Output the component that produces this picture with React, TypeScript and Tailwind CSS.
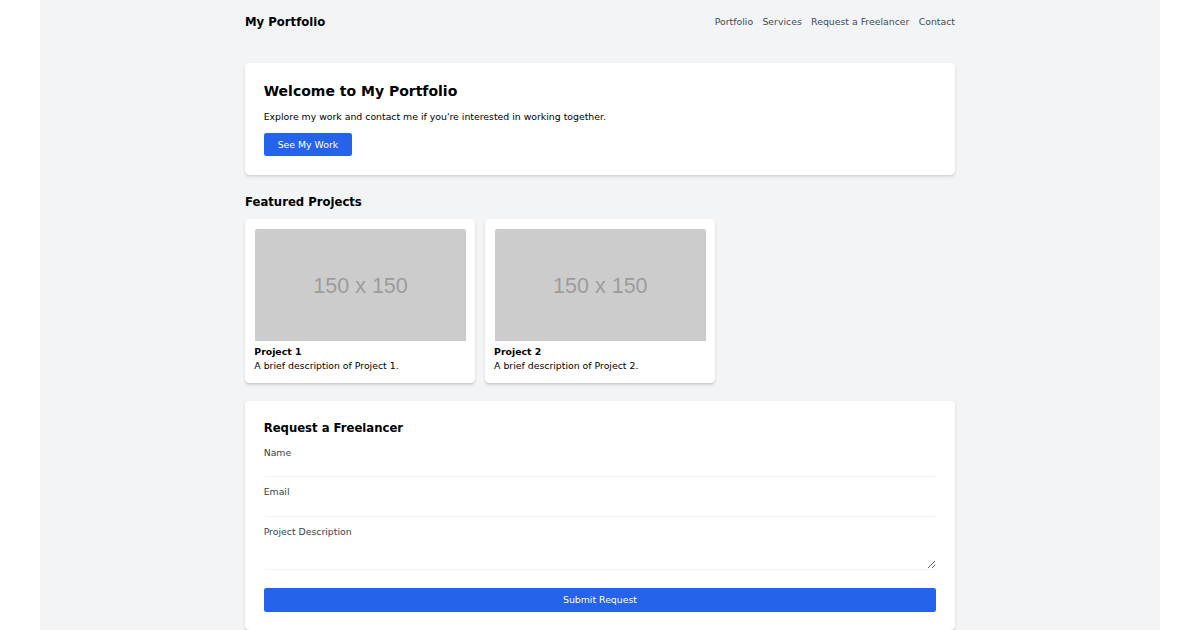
import React from "react";

const cardShadow =
  "shadow-[0_2.33px_3.5px_-0.58px_rgba(0,0,0,0.1),0_1.17px_2.33px_-1.17px_rgba(0,0,0,0.1)]";

function Placeholder() {
  return (
    <div className="ml-[0.5px] h-[112px] w-[211.5px] rounded-t-[2.33px] bg-[#cccccc] flex items-center justify-center overflow-hidden pt-[4px]">
      <span className="font-['Liberation_Sans',Arial,sans-serif] text-[21.5px] leading-none text-[#9c9c9c]">
        150 x 150
      </span>
    </div>
  );
}

function ProjectCard({ n }: { n: number }) {
  return (
    <div className={`bg-white rounded-[4.67px] p-[9.33px] ${cardShadow}`}>
      <Placeholder />
      <h3 className="mt-[4.67px] text-[9.33px] leading-[14px] font-bold text-black">Project {n}</h3>
      <p className="text-[9.33px] leading-[14px] text-black">A brief description of Project {n}.</p>
    </div>
  );
}

export default function App() {
  return (
    <div className="min-h-[630px] bg-white font-['DejaVu_Sans',sans-serif]">
      <div className="mx-auto w-[1120px] min-h-[630px] bg-gray-100">
        <div className="mx-auto w-[710px]">
          <header className="flex items-center justify-between py-[14px]">
            <div className="text-[11.67px] leading-[16.33px] font-bold text-black">My Portfolio</div>
            <nav className="flex gap-[9.33px] text-[9.33px] leading-[14px] text-[#454b55]">
              <a>Portfolio</a>
              <a>Services</a>
              <a>Request a Freelancer</a>
              <a>Contact</a>
            </nav>
          </header>

          <section className={`mt-[18.67px] bg-white rounded-[4.67px] p-[18.67px] ${cardShadow}`}>
            <h1 className="text-[14px] leading-[18.67px] font-bold text-black">Welcome to My Portfolio</h1>
            <p className="mt-[9.33px] text-[9.33px] leading-[14px] text-black">
              Explore my work and contact me if you're interested in working together.
            </p>
            <button className="mt-[9.33px] h-[23.33px] px-[14px] rounded-[2.33px] bg-[#2563eb] text-white text-[9.33px] leading-[14px]">
              See My Work
            </button>
          </section>

          <section className="mt-[18.67px]">
            <h2 className="text-[11.67px] leading-[16.33px] font-bold text-black">Featured Projects</h2>
            <div className="mt-[9.33px] grid grid-cols-3 gap-[9.33px]">
              <ProjectCard n={1} />
              <ProjectCard n={2} />
            </div>
          </section>

          <section className={`mt-[18.67px] bg-white rounded-[4.67px] p-[18.67px] ${cardShadow}`}>
            <h2 className="text-[11.67px] leading-[16.33px] font-bold text-black">Request a Freelancer</h2>
            <form className="mt-[9.33px] flex flex-col">
              <label className="block text-[9.33px] leading-[14px] text-[#374151]">Name</label>
              <input
                type="text"
                className="mt-[2.33px] block w-full h-[14px] rounded-[3.5px] bg-white text-[9.33px] shadow-[0_0.58px_1.17px_0_rgba(0,0,0,0.05)] outline-none"
              />
              <label className="mt-[9.33px] block text-[9.33px] leading-[14px] text-[#374151]">Email</label>
              <input
                type="email"
                className="mt-[2.33px] block w-full h-[14px] rounded-[3.5px] bg-white text-[9.33px] shadow-[0_0.58px_1.17px_0_rgba(0,0,0,0.05)] outline-none"
              />
              <label className="mt-[9.33px] block text-[9.33px] leading-[14px] text-[#374151]">
                Project Description
              </label>
              <textarea
                rows={2}
                className="mt-[2.33px] block w-full h-[28px] rounded-[3.5px] bg-white text-[9.33px] leading-[14px] shadow-[0_0.58px_1.17px_0_rgba(0,0,0,0.05)] outline-none"
              />
              <button
                type="button"
                className="mt-[19px] h-[23.33px] w-full rounded-[2.33px] bg-[#2563eb] text-white text-[9.33px] leading-[14px]"
              >
                Submit Request
              </button>
            </form>
          </section>
        </div>
      </div>
    </div>
  );
}
